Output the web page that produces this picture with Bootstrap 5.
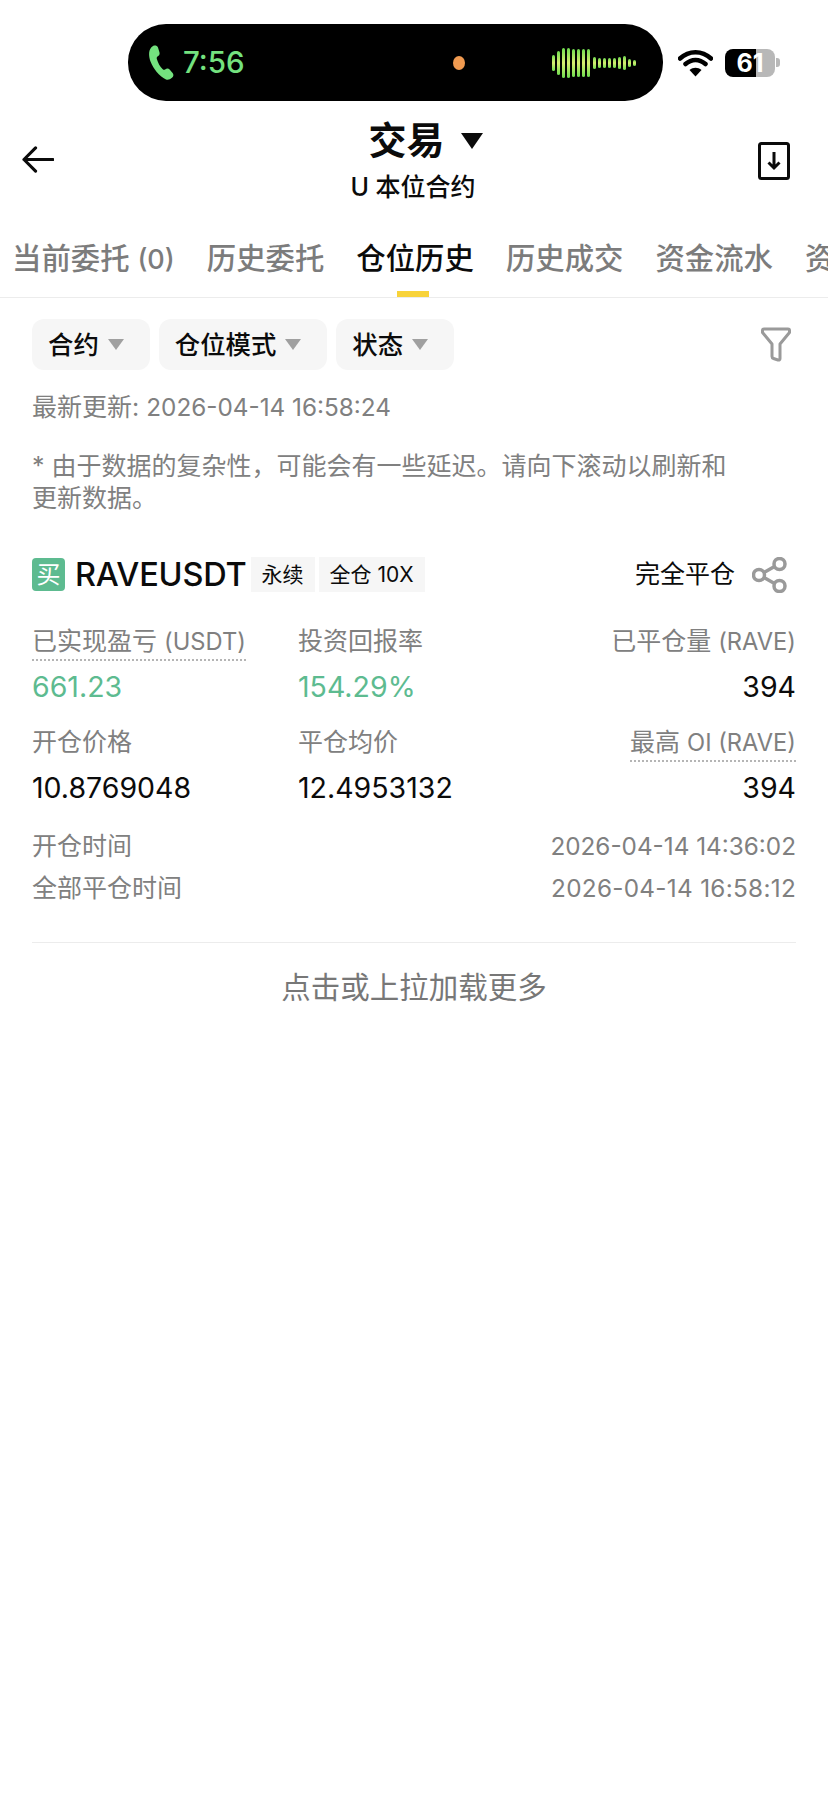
<!DOCTYPE html>
<html lang="zh-CN">
<head>
    <meta charset="UTF-8">
    <meta name="viewport" content="width=device-width, initial-scale=1.0">
    <title>交易 - 仓位历史</title>
    <link href="https://cdn.jsdelivr.net/npm/bootstrap@5.3.0/dist/css/bootstrap.min.css" rel="stylesheet">
    <style>
        body {
            width: 828px;
            height: 1796px;
            overflow: hidden;
            background: #fff;
            color: #0b0b0b;
            font-family: Inter, "Noto Sans CJK SC", sans-serif;
        }

        /* status bar */
        .status-bar { height: 101px; padding: 24px 0 0 128px; }
        .island {
            width: 535px;
            height: 77px;
            border-radius: 38px;
            background: #000;
            padding: 0 27px 0 20px;
            color: #74e27f;
            font-size: 29.5px;
            font-weight: 500;
        }
        .island-left { width: 305px; gap: 5px; }
        .island-dot { width: 12px; height: 14px; border-radius: 50%; background: #f09a50; }
        .island-wave { margin-left: 87px; }
        .wifi-icon { margin-left: 15px; }
        .battery {
            width: 50px;
            height: 28px;
            margin-left: 12px;
            border-radius: 8px;
            background: linear-gradient(to right, #000 62%, #b8b8b8 62%);
            color: #fff;
            font-size: 25px;
            font-weight: 700;
            line-height: 28px;
            text-align: center;
        }
        .battery-tip { width: 4px; height: 9px; margin-left: 1px; background: #b8b8b8; border-radius: 0 3px 3px 0; }

        /* header */
        .page-head { height: 104px; padding: 17px 38px 0 21px; }
        .back-arrow { margin-top: 27px; }
        .head-title { font-size: 38px; font-weight: 700; line-height: 44px; gap: 16px; padding-left: 25px; }
        .head-sub { font-size: 25px; font-weight: 500; line-height: 32px; margin-top: 9px; }
        .head-center { flex: 1; margin-left: 14px; }
        .caret-big { width: 22px; height: 17px; }

        /* tabs */
        .tab-strip {
            height: 93px;
            padding: 0 0 0 12px;
            gap: 32px;
            overflow: hidden;
            border-bottom: 1px solid #ececec;
            white-space: nowrap;
        }
        .tab-item {
            position: relative;
            padding-top: 15px;
            font-size: 29.4px;
            line-height: 77px;
            font-weight: 500;
            color: #7c7c7c;
            flex: none;
        }
        .tab-count { font-size: 27px; }
        .tab-item.is-active { color: #0b0b0b; }
        .tab-item.is-active::after {
            content: "";
            position: absolute;
            left: 41px;
            bottom: 0;
            width: 32px;
            height: 6px;
            background: #f8d33a;
        }

        /* filters */
        .filter-row { padding: 21px 37px 0 32px; gap: 9px; }
        .chip {
            height: 51px;
            padding: 0 26px 0 16px;
            gap: 9px;
            border-radius: 12px;
            background: #f6f6f6;
            font-size: 25.4px;
            font-weight: 500;
            line-height: 51px;
        }
        .chip svg { width: 16px; height: 11px; }

        .muted-line { padding: 0 32px; color: #808080; font-size: 25px; }
        .date-num { font-size: 24.3px; }
        .date-wide { letter-spacing: .3px; }
        .updated { margin-top: 18px; line-height: 38px; }
        .note { margin-top: 24px; line-height: 32px; }

        /* position */
        .position { padding: 0 32px; margin-top: 42px; }
        .side-mark {
            width: 33px;
            height: 33px;
            border-radius: 4px;
            background: #5dbb90;
            color: #fff;
            font-size: 24px;
            line-height: 33px;
            text-align: center;
        }
        .symbol { margin-left: 10px; font-size: 32.5px; font-weight: 500; letter-spacing: -.2px; line-height: 36px; }
        .tag {
            height: 35px;
            padding: 0 11px;
            margin-left: 4px;
            background: #f6f6f6;
            font-size: 21px;
            line-height: 35px;
        }
        .close-type { font-size: 25px; margin-right: 17px; }
        .share-icon { margin-right: 8px; }

        .stats { display: grid; grid-template-columns: 266px 1fr auto; margin-top: 29px; }
        .stat-label { font-size: 25px; line-height: 36px; color: #808080; height: 43px; }
        .stat-latin { font-size: 23.7px; }
        .stat-value { font-size: 28.5px; line-height: 42px; height: 58px; }
        .dotted { display: inline-block; border-bottom: 2px dotted #b5b5b5; height: 38px; }
        .gain { color: #5dbb90; }

        .time-row { font-size: 25px; line-height: 42px; color: #808080; }
        .times { padding-bottom: 33px; border-bottom: 1px solid #ececec; }
        .load-more { margin-top: 21px; font-size: 29.5px; line-height: 46px; color: #777; text-align: center; }
    </style>
</head>
<body>
    <div class="status-bar d-flex align-items-center">
        <div class="island d-flex align-items-center">
            <div class="island-left d-flex align-items-center">
                <svg width="26" height="36" viewBox="0 0 26 36"><path fill="#74e27f" d="M5 1c2-1 4-.5 5 1.500l1.500 5c.5 2-.5 3-2 4-.8.6-1 1.500-.5 3 1 3.500 3 7 5.500 9.500 1 1 1.800 1 2.600.5 1.500-1 3-1.500 4.500 0l3 3.500c1.300 1.700 1 3.500-.6 4.800-1.800 1.600-4 2.500-6 1.700C11 31 5.500 24 2.500 16.500.5 11 0 4 5 1z"/></svg>
                <span class="ms-1">7:56</span>
            </div>
            <span class="island-dot"></span>
            <svg class="island-wave" width="84" height="34" viewBox="0 0 84 34">
                <defs><linearGradient id="wave" x1="0" x2="0" y1="0" y2="1"><stop offset="0" stop-color="#6fdc4f"/><stop offset=".5" stop-color="#d8ec70"/><stop offset="1" stop-color="#6fdc4f"/></linearGradient></defs>
                <g fill="url(#wave)">
                    <rect x="0" y="9" width="3" height="16" rx="1.500"/><rect x="5" y="5" width="3" height="24" rx="1.500"/><rect x="10" y="2" width="3" height="30" rx="1.500"/><rect x="15" y="2" width="3" height="30" rx="1.500"/><rect x="20" y="3" width="3" height="28" rx="1.500"/><rect x="25" y="3" width="3" height="28" rx="1.500"/><rect x="30" y="3" width="3" height="28" rx="1.500"/><rect x="35" y="3" width="3" height="28" rx="1.500"/><rect x="41" y="11" width="3" height="12" rx="1.500"/><rect x="46" y="12" width="3" height="10" rx="1.500"/><rect x="51" y="12" width="3" height="10" rx="1.500"/><rect x="56" y="12" width="3" height="10" rx="1.500"/><rect x="61" y="12" width="3" height="10" rx="1.500"/><rect x="66" y="11" width="3" height="12" rx="1.500"/><rect x="71" y="10" width="3" height="14" rx="1.500"/><rect x="76" y="13" width="3" height="8" rx="1.500"/><rect x="81" y="14" width="3" height="6" rx="1.500"/>
                </g>
            </svg>
        </div>
        <svg class="wifi-icon" width="35" height="28" viewBox="0 0 35 28"><path d="M2 9.500C11 1 24 1 33 9.500M7.500 15c6-5.500 14-5.500 20 0" fill="none" stroke="#000" stroke-width="4.500" stroke-linecap="round"/><path d="M17.500 27.500 11.500 21c3.500-3 8.500-3 12 0z" fill="#000"/></svg>
        <div class="battery">61</div>
        <span class="battery-tip"></span>
    </div>

    <header class="page-head d-flex align-items-start">
        <svg class="back-arrow" width="33" height="29" viewBox="0 0 34 30"><path d="M15 3 3 15l12 12M3 15h30" fill="none" stroke="#0b0b0b" stroke-width="3.200" stroke-linecap="round" stroke-linejoin="round"/></svg>
        <div class="head-center d-flex flex-column align-items-center">
            <div class="head-title d-flex align-items-center">
                <span>交易</span>
                <svg class="caret-big" viewBox="0 0 22 17"><path d="M0 1h22L11 17z" fill="#0b0b0b"/></svg>
            </div>
            <div class="head-sub">U 本位合约</div>
        </div>
        <svg class="mt-4" width="32" height="38" viewBox="0 0 32 38"><rect x="1.500" y="1.500" width="29" height="35" rx="2" fill="none" stroke="#0b0b0b" stroke-width="3"/><path d="M16 10v16M10.500 20.500 16 26l5.500-5.500" fill="none" stroke="#0b0b0b" stroke-width="3"/></svg>
    </header>

    <nav class="tab-strip d-flex">
        <div class="tab-item">当前委托 <span class="tab-count">(0)</span></div>
        <div class="tab-item">历史委托</div>
        <div class="tab-item is-active">仓位历史</div>
        <div class="tab-item">历史成交</div>
        <div class="tab-item">资金流水</div>
        <div class="tab-item">资金费用</div>
    </nav>

    <div class="filter-row d-flex align-items-center">
        <div class="chip d-flex align-items-center">合约 <svg viewBox="0 0 16 11"><path d="M0 0h16L8 11z" fill="#a0a0a0"/></svg></div>
        <div class="chip d-flex align-items-center">仓位模式 <svg viewBox="0 0 16 11"><path d="M0 0h16L8 11z" fill="#a0a0a0"/></svg></div>
        <div class="chip d-flex align-items-center">状态 <svg viewBox="0 0 16 11"><path d="M0 0h16L8 11z" fill="#a0a0a0"/></svg></div>
        <svg class="ms-auto" width="30" height="36" viewBox="0 0 30 36"><path d="M3 2h24q1.500 0 1.500 1.500v2L19 17v14.500q0 2-2 1.500l-4.500-1.500Q11 31 11 29.500V17L1.500 5.500v-2Q1.500 2 3 2z" fill="none" stroke="#9a9a9a" stroke-width="3" stroke-linejoin="round"/></svg>
    </div>

    <div class="muted-line updated">最新更新: <span class="date-num">2026-04-14 16:58:24</span></div>
    <div class="muted-line note">* 由于数据的复杂性，可能会有一些延迟。请向下滚动以刷新和<br>更新数据。</div>

    <section class="position">
        <div class="d-flex align-items-center">
            <div class="side-mark">买</div>
            <div class="symbol">RAVEUSDT</div>
            <div class="tag">永续</div>
            <div class="tag">全仓 10X</div>
            <div class="close-type ms-auto">完全平仓</div>
            <svg class="share-icon" width="36" height="36" viewBox="0 0 36 36"><g fill="none" stroke="#9a9a9a" stroke-width="3.500"><circle cx="27.500" cy="7" r="5.500"/><circle cx="7" cy="18" r="5.500"/><circle cx="27.500" cy="29" r="5.500"/><path d="M12 15.500l10.500-6M12 20.500l10.500 6"/></g></svg>
        </div>

        <div class="stats">
            <div class="stat-label"><span class="dotted">已实现盈亏 <span class="stat-latin">(USDT)</span></span></div>
            <div class="stat-label">投资回报率</div>
            <div class="stat-label text-end">已平仓量 <span class="stat-latin">(RAVE)</span></div>
            <div class="stat-value gain">661.23</div>
            <div class="stat-value gain">154.29%</div>
            <div class="stat-value text-end">394</div>
            <div class="stat-label">开仓价格</div>
            <div class="stat-label">平仓均价</div>
            <div class="stat-label text-end"><span class="dotted">最高 <span class="stat-latin">OI (RAVE)</span></span></div>
            <div class="stat-value">10.8769048</div>
            <div class="stat-value">12.4953132</div>
            <div class="stat-value text-end">394</div>
        </div>

        <div class="times">
            <div class="time-row d-flex justify-content-between"><span>开仓时间</span><span class="date-num">2026-04-14 14:36:02</span></div>
            <div class="time-row d-flex justify-content-between"><span>全部平仓时间</span><span class="date-num date-wide">2026-04-14 16:58:12</span></div>
        </div>
        <div class="load-more">点击或上拉加载更多</div>
    </section>

    <script src="https://cdn.jsdelivr.net/npm/bootstrap@5.3.0/dist/js/bootstrap.bundle.min.js"></script>
</body>
</html>
